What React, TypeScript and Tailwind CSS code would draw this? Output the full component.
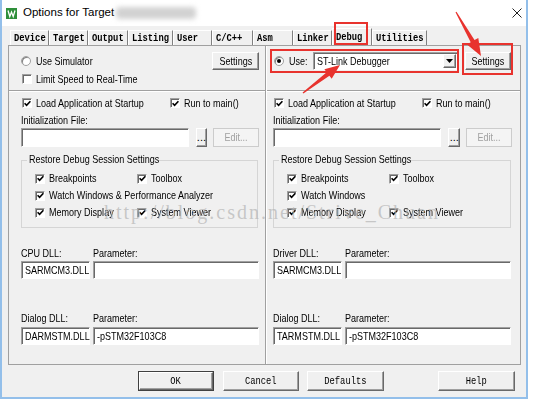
import React from "react";

const mono = "font-['Liberation_Mono',monospace] text-[11px]";
const raised =
  "bg-[#f0f0f0] border border-t-white border-l-white border-b-[#696969] border-r-[#696969] shadow-[inset_-1px_-1px_0_#a0a0a0] flex items-center justify-center";
const sunken =
  "bg-white border border-t-[#a0a0a0] border-l-[#a0a0a0] border-b-white border-r-white shadow-[inset_1px_1px_0_#696969]";

const tabs = [
  { label: "Device", w: "w-[39px]" },
  { label: "Target", w: "w-[39px]" },
  { label: "Output", w: "w-[40px]" },
  { label: "Listing", w: "w-[45px]" },
  { label: "User", w: "w-[39px]" },
  { label: "C/C++", w: "w-[41px]" },
  { label: "Asm", w: "w-[40px]" },
  { label: "Linker", w: "w-[39px]" },
  { label: "Debug", w: "w-[40px]" },
  { label: "Utilities", w: "w-[55px]" },
];

function arrow(x1: number, y1: number, x2: number, y2: number, head = 17, half = 6.5, w0 = 0.6, w1 = 2.2) {
  const dx = x2 - x1;
  const dy = y2 - y1;
  const len = Math.hypot(dx, dy);
  const ux = dx / len;
  const uy = dy / len;
  const nx = -uy;
  const ny = ux;
  const bx = x2 - ux * head;
  const by = y2 - uy * head;
  const pts = [
    [x1 + nx * w0, y1 + ny * w0],
    [bx + nx * w1, by + ny * w1],
    [bx + nx * half, by + ny * half],
    [x2, y2],
    [bx - nx * half, by - ny * half],
    [bx - nx * w1, by - ny * w1],
    [x1 - nx * w0, y1 - ny * w0],
  ];
  return pts.map((p) => p.map((v) => v.toFixed(1)).join(",")).join(" ");
}

// the dialog font in the shot is narrow, so squeeze the glyphs horizontally
function T({ children, center }: { children: React.ReactNode; center?: boolean }) {
  return (
    <span className={`inline-block whitespace-nowrap scale-x-[0.82] ${center ? "origin-center" : "origin-left"}`}>
      {children}
    </span>
  );
}

function M({ children, center }: { children: React.ReactNode; center?: boolean }) {
  return (
    <span className={`inline-block whitespace-nowrap scale-x-[0.8] ${center ? "origin-center" : "origin-left"}`}>
      {children}
    </span>
  );
}

function Check({ label }: { label: string }) {
  return (
    <div className="flex items-center gap-[4px] h-[12px]">
      <span className={`w-[10px] h-[10px] shrink-0 flex items-center justify-center ${sunken}`}>
        <svg width="7" height="7" viewBox="0 0 7 7">
          <path d="M0.6 3.2 L2.6 5.3 L6.4 1.2" stroke="#000" strokeWidth="1.6" fill="none" />
        </svg>
      </span>
      <T>{label}</T>
    </div>
  );
}

function Radio({ on }: { on?: boolean }) {
  return (
    <span className="w-[10px] h-[10px] shrink-0 rounded-full bg-white border border-[#a0a0a0] shadow-[inset_1px_1px_0_#808080] flex items-center justify-center">
      {on && <span className="w-[4px] h-[4px] rounded-full bg-black" />}
    </span>
  );
}

function Field({ w, text }: { w: string; text?: string }) {
  return (
    <div className={`h-[18px] flex items-center pl-[3px] ${sunken} ${w}`}>
      {text && <T>{text}</T>}
    </div>
  );
}

function Half({ right }: { right?: boolean }) {
  const pad = right ? "pl-[6px] pr-[8px]" : "pl-[12px] pr-[6px]";
  return (
    <div className={`flex flex-col ${right ? "w-[253px]" : "w-[256px]"}`}>
      {/* target selection */}
      <div className={`${pad} pt-[6px]`}>
        {right ? (
          <div className="h-[18px] flex items-center">
            <div className="ml-[1px]">
              <Radio on />
            </div>
            <span className="ml-[5px] w-[24px]">
              <T>Use:</T>
            </span>
            <div className={`w-[145px] h-[18px] flex items-center ${sunken}`}>
              <span className="pl-[3px] flex-1">
                <T>ST-Link Debugger</T>
              </span>
              <span className={`w-[13px] h-[14px] mr-[1px] ${raised}`}>
                <svg width="7" height="4" viewBox="0 0 7 4">
                  <path d="M0 0 H7 L3.5 4 Z" fill="#000" />
                </svg>
              </span>
            </div>
            <div className={`ml-[7px] w-[46px] h-[18px] ${raised}`}>
              <T center>Settings</T>
            </div>
          </div>
        ) : (
          <div className="h-[18px] flex items-center">
            <Radio />
            <span className="ml-[5px]">
              <T>Use Simulator</T>
            </span>
            <div className={`ml-auto w-[47px] h-[18px] ${raised}`}>
              <T center>Settings</T>
            </div>
          </div>
        )}
        <div className="h-[12px] mt-[3px]">
          {!right && (
            <div className="flex items-center gap-[4px] h-[12px] pl-[1px]">
              <span className={`w-[10px] h-[10px] shrink-0 ${sunken}`} />
              <T>Limit Speed to Real-Time</T>
            </div>
          )}
        </div>
      </div>

      {/* separator */}
      <div className="mt-[5px] h-[2px] border-t border-t-[#a0a0a0] border-b border-b-white" />

      <div className={`${pad} flex flex-col`}>
        <div className="mt-[5px] flex pl-[1px]">
          <div className="w-[148px]">
            <Check label="Load Application at Startup" />
          </div>
          <Check label="Run to main()" />
        </div>
        <div className="mt-[5px] h-[12px] flex items-center">
          <T>Initialization File:</T>
        </div>
        <div className="mt-[2px] flex items-center h-[19px]">
          <Field w="w-[169px] !h-[19px]" />
          <div className={`ml-[7px] w-[12px] h-[19px] items-end pb-[3px] ${raised}`}>...</div>
          <div className="ml-[6px] w-[46px] h-[19px] border border-[#cccccc] bg-[#f4f4f4] text-[#a0a0a0] flex items-center justify-center">
            <T center>Edit...</T>
          </div>
        </div>

        {/* restore group */}
        <div className="relative mt-[13px] h-[68px] mr-[1px] border border-[#d5d5d5] pt-[9px] pl-[13px]">
          <span className="absolute -top-[7px] left-[5px] px-[2px] bg-[#f0f0f0] w-[132px]">
            <T>Restore Debug Session Settings</T>
          </span>
          <div className="h-[17px] flex items-center">
            <div className="w-[102px]">
              <Check label="Breakpoints" />
            </div>
            <Check label="Toolbox" />
          </div>
          <div className="h-[17px] flex items-center">
            <Check label={right ? "Watch Windows" : "Watch Windows & Performance Analyzer"} />
          </div>
          <div className="h-[17px] flex items-center">
            <div className="w-[102px]">
              <Check label="Memory Display" />
            </div>
            <Check label="System Viewer" />
          </div>
        </div>

        {/* dlls */}
        <div className="mt-[19px] h-[12px] flex items-center">
          <span className="w-[72px]">
            <T>{right ? "Driver DLL:" : "CPU DLL:"}</T>
          </span>
          <T>Parameter:</T>
        </div>
        <div className="mt-[2px] flex">
          <Field w="w-[69px]" text="SARMCM3.DLL" />
          <Field w="ml-[3px] w-[166px]" />
        </div>
        <div className="mt-[33px] h-[12px] flex items-center">
          <span className="w-[72px]">
            <T>Dialog DLL:</T>
          </span>
          <T>Parameter:</T>
        </div>
        <div className="mt-[3px] flex">
          <Field w="w-[69px]" text={right ? "TARMSTM.DLL" : "DARMSTM.DLL"} />
          <Field w="ml-[3px] w-[166px]" text="-pSTM32F103C8" />
        </div>
      </div>
    </div>
  );
}

export default function App() {
  return (
    <div className="relative w-[533px] h-[399px] bg-white overflow-hidden font-['Liberation_Sans',Arial,sans-serif] text-[11px] text-black leading-none">
      <div className="w-[528px] h-[399px] border-x-2 border-b-2 border-[#93bfea] flex flex-col bg-[#f0f0f0]">
        {/* title bar */}
        <div className="h-[26px] shrink-0 bg-white flex items-center pl-[4px] relative">
          <svg width="11" height="11" viewBox="0 0 11 11">
            <rect width="11" height="11" fill="#2f8f3a" />
            <path d="M2 2.5 L3.8 8.5 L5.5 4 L7.2 8.5 L9 2.5" stroke="#fff" strokeWidth="1.3" fill="none" />
          </svg>
          <span className="ml-[6px] text-[11.5px]">Options for Target</span>
          <span className="ml-[2px] w-[80px] h-[12px] bg-[#d2d2d2] blur-[2.5px] rounded-sm" />
          <svg className="ml-auto mr-[4px]" width="10" height="10" viewBox="0 0 10 10">
            <path d="M0.5 0.5 L9.5 9.5 M9.5 0.5 L0.5 9.5" stroke="#222" strokeWidth="1" />
          </svg>
        </div>

        {/* tab strip */}
        <div className={`h-[19px] shrink-0 flex items-end pl-[8px] ${mono} font-bold`}>
          {tabs.map((t) => (
            <div
              key={t.label}
              className={`${t.w} ${
                t.label === "Debug" ? "h-[17px] bg-[#f0f0f0]" : "h-[15px]"
              } border-l border-t border-l-white border-t-white border-r border-r-[#808080] pl-[3px] flex items-center`}
            >
              <M>{t.label}</M>
            </div>
          ))}
        </div>

        {/* tab page */}
        <div className="ml-[6px] w-[513px] h-[320px] shrink-0 border border-[#a0a0a0] flex">
          <Half />
          <div className="w-[2px] border-l border-l-[#a0a0a0] border-r border-r-white" />
          <Half right />
        </div>

        {/* dialog buttons */}
        <div className={`mt-[6px] h-[20px] flex ${mono}`}>
          <div className="ml-[136px] w-[76px] h-[20px] border border-[#404040] flex">
            <div className={`flex-1 ${raised}`}>
              <M center>OK</M>
            </div>
          </div>
          <div className={`ml-[9px] w-[76px] h-[20px] ${raised}`}>
            <M center>Cancel</M>
          </div>
          <div className={`ml-[8px] w-[77px] h-[20px] ${raised}`}>
            <M center>Defaults</M>
          </div>
          <div className={`ml-[54px] w-[77px] h-[20px] ${raised}`}>
            <M center>Help</M>
          </div>
        </div>
      </div>

      {/* watermark */}
      <div className="absolute left-[104px] top-[202px] font-['Liberation_Serif',serif] text-[20px] tracking-[2px] text-[#b4b4b4]/70 pointer-events-none">
        http://blog.csdn.net/Strive_Chuan
      </div>

      {/* annotation boxes */}
      <div className="absolute left-[334px] top-[22px] w-[34px] h-[23px] border-2 border-[#e8332e]" />
      <div className="absolute left-[270px] top-[49px] w-[189px] h-[24px] border-2 border-[#e8332e]" />
      <div className="absolute left-[462px] top-[43px] w-[51px] h-[32px] border-2 border-[#e8332e]" />
      <svg className="absolute inset-0 pointer-events-none" width="533" height="399">
        <polygon points={arrow(456, 12, 481, 56)} fill="#e8332e" />
        <polygon points={arrow(303, 93, 340, 65, 15, 6)} fill="#e8332e" />
      </svg>
    </div>
  );
}
